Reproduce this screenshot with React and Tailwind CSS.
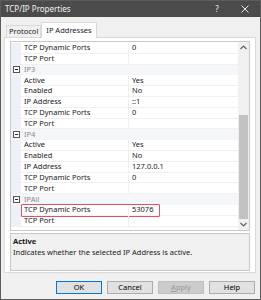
import React from 'react';

const rows = [
    { name: 'TCP Dynamic Ports', value: '0' },
    { name: 'TCP Port', value: '' },
    { cat: 'IP3' },
    { name: 'Active', value: 'Yes' },
    { name: 'Enabled', value: 'No' },
    { name: 'IP Address', value: '::1' },
    { name: 'TCP Dynamic Ports', value: '0' },
    { name: 'TCP Port', value: '' },
    { cat: 'IP4' },
    { name: 'Active', value: 'Yes' },
    { name: 'Enabled', value: 'No' },
    { name: 'IP Address', value: '127.0.0.1' },
    { name: 'TCP Dynamic Ports', value: '0' },
    { name: 'TCP Port', value: '' },
    { cat: 'IPAll' },
    { name: 'TCP Dynamic Ports', value: '53076', marked: true },
    { name: 'TCP Port', value: '' },
];

const Minus = () => (
    <svg width="7" height="7" viewBox="0 0 7 7" className="block">
        <rect x="0.5" y="0.5" width="6" height="6" fill="white" stroke="#555" />
        <line x1="2" y1="3.5" x2="5" y2="3.5" stroke="#222" />
    </svg>
);

const Row = ({ row }) => {
    if (row.cat) {
        return (
            <div className="flex h-[10.8px] items-center bg-[#f4f6fa]">
                <div className="flex w-[10px] justify-center bg-[#eef1f7]">
                    <Minus />
                </div>
                <div className="pl-[3px] text-[#8a8a8a]">{row.cat}</div>
            </div>
        );
    }
    return (
        <div className="relative flex h-[10.8px] items-center">
            <div className="h-full w-[10px] bg-[#eef1f7]" />
            <div className="flex h-full w-[108px] items-center border-r border-b border-[#f0f0f0] pl-[3px]">{row.name}</div>
            <div className="flex h-full flex-1 items-center border-b border-[#f0f0f0] pl-[3px]">{row.value}</div>
            {row.marked && (
                <div className="absolute left-[10px] top-[-1px] h-[13px] w-[139px] rounded-[1px] border-[1.5px] border-[#e4505e]" />
            )}
        </div>
    );
};

const Button = ({ children, primary, disabled }) => (
    <div
        className={`flex h-[13px] w-[46px] items-center justify-center border text-[7.5px] ${
            primary
                ? 'border-[#0078d7] bg-[#e1e1e1] text-black'
                : disabled
                  ? 'border-[#bfbfbf] bg-[#cccccc] text-[#9a9a9a]'
                  : 'border-[#adadad] bg-[#e1e1e1] text-black'
        }`}
    >
        {children}
    </div>
);

const App = () => {
    return (
        <div
            className="flex h-[300px] w-[261px] flex-col border border-[#5c5c5c] bg-[#f0f0f0] text-[7.5px] text-[#1a1a1a]"
            style={{ fontFamily: '"Noto Sans", "Open Sans", sans-serif' }}
        >
            <div className="flex h-[16px] items-center bg-[#4b4b4b] pl-[4px] text-[8px] text-[#f2f2f2]">
                <div className="flex-1">TCP/IP Properties</div>
                <div className="w-[26px] text-center">?</div>
                <div className="flex w-[30px] justify-center">
                    <svg width="8" height="8" viewBox="0 0 8 8">
                        <path d="M0.5 0.5 L7.5 7.5 M7.5 0.5 L0.5 7.5" stroke="#eaeaea" strokeWidth="1" />
                    </svg>
                </div>
            </div>

            <div className="ml-[3px] mt-[5px] w-[252px]">
                <div className="flex h-[15px] items-end pl-[2px]">
                    <div className="flex h-[12px] items-center border border-b-0 border-[#d9d9d9] bg-[#f0f0f0] px-[2px]">Protocol</div>
                    <div className="relative z-10 -mb-px flex h-[16px] items-center border border-b-0 border-[#d9d9d9] bg-white px-[4px]">
                        IP Addresses
                    </div>
                </div>
                <div className="flex h-[236px] flex-col border border-[#d9d9d9] bg-white px-[5px] pt-[3px]">
                    <div className="flex h-[190px] border border-[#c8c8c8] bg-white">
                        <div className="flex-1 overflow-hidden pt-[1px]">
                            {rows.map((r, i) => (
                                <Row key={i} row={r} />
                            ))}
                        </div>
                        <div className="flex w-[11px] flex-col bg-[#f0f0f0]">
                            <div className="flex h-[11px] items-center justify-center">
                                <svg width="7" height="5" viewBox="0 0 7 5">
                                    <path d="M0.5 4 L3.5 1 L6.5 4" fill="none" stroke="#606060" strokeWidth="1.2" />
                                </svg>
                            </div>
                            <div className="flex flex-1 flex-col px-[1px]">
                                <div className="h-[62px]" />
                                <div className="flex-1 bg-[#c2c2c2]" />
                            </div>
                            <div className="flex h-[11px] items-center justify-center">
                                <svg width="7" height="5" viewBox="0 0 7 5">
                                    <path d="M0.5 1 L3.5 4 L6.5 1" fill="none" stroke="#606060" strokeWidth="1.2" />
                                </svg>
                            </div>
                        </div>
                    </div>
                    <div className="mt-[2px] h-[38px] border border-[#c8c8c8] bg-[#f0f0f0] px-[2px] pt-[2px]">
                        <div className="font-bold leading-[11px]">Active</div>
                        <div className="leading-[11px]">Indicates whether the selected IP Address is active.</div>
                    </div>
                </div>
            </div>

            <div className="mt-[8px] flex justify-end gap-[5px] pr-[5px]">
                <Button primary>OK</Button>
                <Button>Cancel</Button>
                <Button disabled>
                    <span className="underline">A</span>pply
                </Button>
                <Button>Help</Button>
            </div>
        </div>
    );
};

export default App;
